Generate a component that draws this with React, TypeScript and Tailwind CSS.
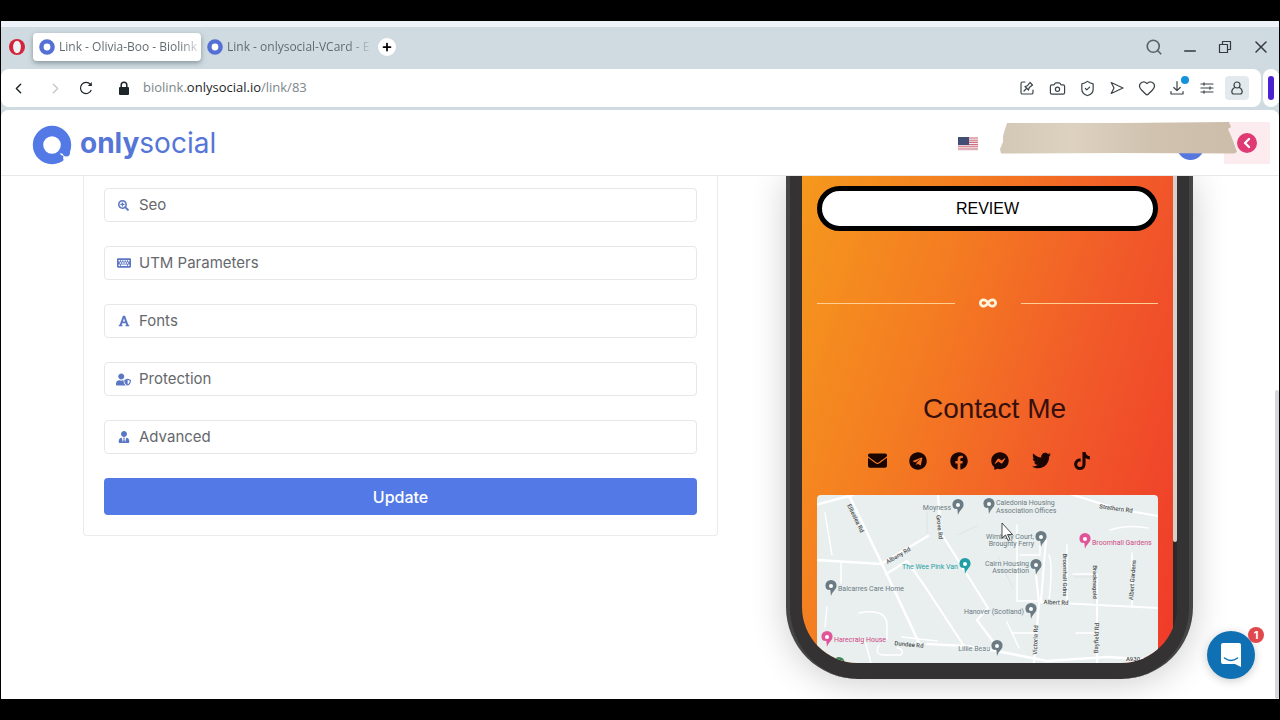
import type { ReactNode } from "react";
import {
  FaEnvelope,
  FaFacebook,
  FaFacebookMessenger,
  FaFont,
  FaInfinity,
  FaKeyboard,
  FaSearchPlus,
  FaTelegram,
  FaTiktok,
  FaTwitter,
  FaUserShield,
  FaUserTie,
} from "react-icons/fa";
import {
  Camera,
  ChevronLeft,
  ChevronRight,
  Heart,
  Minus,
  Plus,
  Search,
  ShieldCheck,
  X,
} from "lucide-react";

const sections = [
  { label: "Seo", icon: <FaSearchPlus size={11} /> },
  { label: "UTM Parameters", icon: <FaKeyboard size={14} /> },
  { label: "Fonts", icon: <FaFont size={12} /> },
  { label: "Protection", icon: <FaUserShield size={15} /> },
  { label: "Advanced", icon: <FaUserTie size={12} /> },
];

const socials = [
  { label: "Email", icon: <FaEnvelope size={19} /> },
  { label: "Telegram", icon: <FaTelegram size={18} /> },
  { label: "Facebook", icon: <FaFacebook size={18} /> },
  { label: "Messenger", icon: <FaFacebookMessenger size={18} /> },
  { label: "Twitter", icon: <FaTwitter size={19} /> },
  { label: "TikTok", icon: <FaTiktok size={18} /> },
];

function Favicon() {
  return (
    <svg viewBox="0 0 16 16" className="size-4 shrink-0">
      <circle cx="8" cy="8" r="5.6" fill="#fff" stroke="#5570d4" strokeWidth="4.4" />
    </svg>
  );
}

function OperaLogo() {
  return (
    <svg viewBox="0 0 16 16" className="size-4 shrink-0">
      <circle cx="8" cy="8" r="8" fill="#d3243b" />
      <ellipse cx="8" cy="8" rx="3.9" ry="6.2" fill="#eef3f5" />
    </svg>
  );
}

function LogoMark() {
  return (
    <svg viewBox="0 0 40 40" className="size-10 shrink-0">
      <circle cx="20" cy="20" r="14" fill="none" stroke="#5379e6" strokeWidth="10.4" />
      <path d="M27.800 28.200Q29 31 31.400 30.800Q30.500 33 32 37L40 35L39 30Q34 32.500 30 28.500Z" fill="#fff" />
      <circle cx="27.800" cy="33.400" r="3.200" fill="#5379e6" />
      <circle cx="34.400" cy="27.800" r="3.600" fill="#5379e6" />
    </svg>
  );
}

function Tool({ label, children }: { label: string; children: ReactNode }) {
  return (
    <button type="button" aria-label={label} className="relative flex size-6 items-center justify-center text-[#3a4347]">
      {children}
    </button>
  );
}

function Line({ d }: { d: string }) {
  return (
    <svg viewBox="0 0 16 16" className="size-4" fill="none" stroke="currentColor" strokeWidth="1.2" strokeLinecap="round" strokeLinejoin="round">
      <path d={d} />
    </svg>
  );
}

function TabBar() {
  return (
    <div className="flex h-[42px] items-center bg-[#cfdbe0] pb-[2px] pl-2 text-xs text-[#5d666a]">
      <button type="button" aria-label="Opera menu">
        <OperaLogo />
      </button>
      <button type="button" className="ml-2 flex h-7 w-[168px] items-center gap-1 rounded bg-white px-[6px] whitespace-nowrap shadow-[0_2px_5px_rgba(60,80,90,0.5)]">
        <Favicon />
        <span className="bg-[linear-gradient(to_right,#5d666a_88%,#d5d8da)] bg-clip-text text-transparent">Link - Olivia-Boo - Biolink</span>
      </button>
      <button type="button" className="flex h-7 w-[168px] items-center gap-1 px-[6px] whitespace-nowrap">
        <Favicon />
        <span className="bg-[linear-gradient(to_right,#5d666a_85%,#b9c5ca)] bg-clip-text text-transparent">Link - onlysocial-VCard - E</span>
      </button>
      <button type="button" aria-label="New tab" className="ml-[9px] flex size-[18px] items-center justify-center rounded-full bg-white text-black">
        <Plus size={12} strokeWidth={3.500} />
      </button>
      <div className="ml-auto flex items-center gap-[18px] pr-2 text-[#33393c]">
        <button type="button" aria-label="Search tabs" className="text-[#5a6468]">
          <Search size={18} strokeWidth={2.200} />
        </button>
        <button type="button" aria-label="Minimise" className="pt-2">
          <Minus size={18} strokeWidth={2} />
        </button>
        <button type="button" aria-label="Restore">
          <Line d="M2.500 5.500h8v8h-8zM5.500 5.500v-3h8v8h-3" />
        </button>
        <button type="button" aria-label="Close">
          <X size={20} strokeWidth={1.800} />
        </button>
      </div>
    </div>
  );
}

function AddressBar() {
  return (
    <div className="flex h-[38px] gap-[2px] bg-[#cfdbe0]">
      <div className="flex min-w-0 flex-1 items-center rounded-lg bg-white pr-3 pl-[9px]">
        <button type="button" aria-label="Back" className="text-[#1e2528]">
          <ChevronLeft size={17} strokeWidth={2} />
        </button>
        <button type="button" aria-label="Forward" className="ml-5 text-[#c3c8ca]">
          <ChevronRight size={17} strokeWidth={2} />
        </button>
        <button type="button" aria-label="Reload" className="ml-[14px] text-[#1e2528]">
          <svg viewBox="0 0 16 16" className="size-4" fill="none" stroke="currentColor" strokeWidth="1.2">
            <path d="M13.300 10A5.600 5.600 0 1 1 12.400 4.400" />
            <path d="M13.800 2v4h-4z" fill="currentColor" stroke="none" />
          </svg>
        </button>
        <svg viewBox="0 0 12 14" className="ml-6 h-[14px] w-3" fill="none">
          <rect x="1" y="6" width="10" height="8" rx="1" fill="#1e2528" />
          <path d="M3.200 6.500V4a2.800 2.800 0 0 1 5.600 0v2.500" stroke="#1e2528" strokeWidth="1.500" />
        </svg>
        <a href="#address" className="ml-[13px] text-[13px] text-[#7c868b]">
          biolink.<span className="text-[#1e2528]">onlysocial.io</span>/link/83
        </a>
        <div className="ml-auto flex gap-[6px]">
          <Tool label="Edit page">
            <Line d="M6 2H3.500A1.500 1.500 0 0 0 2 3.500v9A1.500 1.500 0 0 0 3.500 14h9a1.500 1.500 0 0 0 1.500-1.500V10M5 11l2.500-2.500M6 6.500l3.500 3.500.8-2.500L13.500 5 11 2.500 8.500 5.700z" />
          </Tool>
          <Tool label="Snapshot">
            <Camera size={17} strokeWidth={1.700} />
          </Tool>
          <Tool label="Ad blocker">
            <ShieldCheck size={17} strokeWidth={1.700} />
          </Tool>
          <Tool label="Flow">
            <Line d="M2.200 2.500L14 8 2.200 13.500 5 8z" />
          </Tool>
          <Tool label="Bookmark">
            <Heart size={18} strokeWidth={1.700} />
          </Tool>
          <Tool label="Downloads">
            <Line d="M8 1.500v9M4.800 7.500L8 10.700l3.200-3.200M2 11.500V14h12v-2.500" />
            <span className="absolute top-0 right-0 size-2 rounded-full bg-[#1592dc]" />
          </Tool>
          <Tool label="Easy setup">
            <Line d="M2 4h12M2 8h12M2 12h12M5 2.800v2.400M11 6.800v2.400M5 10.800v2.400" />
          </Tool>
          <button type="button" aria-label="Profile" className="flex size-6 items-center justify-center rounded bg-[#e3e9ed] text-[#3a4347]">
            <Line d="M8 2a3 3 0 1 1 0 6A3 3 0 0 1 8 2M5.900 7.200C4 8.300 2.800 10 2.800 11.800 2.800 13.200 3.600 14 5 14h6c1.400 0 2.200-.8 2.200-2.200 0-1.800-1.200-3.500-3.100-4.600" />
          </button>
        </div>
      </div>
      <div className="flex w-4 items-center justify-center rounded-lg bg-white">
        <span className="h-6 w-[6px] rounded-full bg-[#4a22cf]" />
      </div>
    </div>
  );
}

function Flag() {
  return (
    <svg viewBox="0 0 20 16" className="h-4 w-5" role="img" aria-label="English">
      <rect y="1" width="20" height="14" fill="#f4eef0" />
      <path d="M0 2h20M0 4.200h20M0 6.400h20M0 8.600h20M0 10.800h20M0 13h20" stroke="#cf6f7d" strokeWidth="1.100" />
      <rect y="1" width="11" height="8" fill="#414d75" />
    </svg>
  );
}

function SiteHeader() {
  return (
    <header className="flex h-[66px] items-center rounded-t-lg border-b border-[#e6e8ec] bg-white pr-[9px] pl-[31px]">
      <a href="#home" className="flex items-center gap-2 pt-1 font-['Inter','Liberation_Sans',sans-serif] text-[28px] leading-8 text-[#5576d6]">
        <LogoMark />
        <span className="pb-1">
          <span className="font-bold">only</span>social
        </span>
      </a>
      <button type="button" className="mr-[22px] ml-auto pt-[2px]">
        <Flag />
      </button>
      <div className="relative flex h-[42px] w-[270px] items-start justify-end">
        <button type="button" aria-label="Account" className="absolute right-[66px] bottom-1 size-[27px] rounded-full bg-[#5577de]" />
        <button type="button" aria-label="Open panel" className="flex h-[42px] w-[46px] items-center justify-center bg-[#fdecef]">
          <span className="flex size-5 items-center justify-center rounded-full bg-[#df3a73] text-white">
            <ChevronLeft size={16} strokeWidth={3.500} />
          </span>
        </button>
        <svg viewBox="0 0 238 32" className="absolute top-0 right-8 h-8 w-[238px]">
          <defs>
            <linearGradient id="tape" x1="0" x2="1">
              <stop offset="0" stopColor="#d3c7b5" />
              <stop offset="0.300" stopColor="#ddd1c0" />
              <stop offset="0.650" stopColor="#d0c2af" />
              <stop offset="1" stopColor="#cbbda9" />
            </linearGradient>
          </defs>
          <path d="M7 1L120 1 229 0 231 5 228 7 232 16 237 30 234 31.500 120 31 1 31.500 0 27 3 20 3 14z" fill="url(#tape)" />
        </svg>
      </div>
    </header>
  );
}

function SettingsCard() {
  return (
    <form className="min-w-0 flex-1 self-start rounded-b border border-t-0 border-[#e9ebef] px-5 pt-3 pb-5" onSubmit={(e) => e.preventDefault()}>
      <div className="flex flex-col gap-6">
        {sections.map((s) => (
          <button key={s.label} type="button" className="flex h-[34px] items-center gap-2 rounded border border-[#e6e7ea] px-[11px] text-left text-[15px] text-[#66686d]">
            <span className="flex w-[15px] justify-center text-[#5b76c4]">{s.icon}</span>
            {s.label}
          </button>
        ))}
        <button type="submit" className="h-[37px] rounded bg-[#5379e6] text-base font-medium text-white">
          Update
        </button>
      </div>
    </form>
  );
}

const GREY = "#6b7b83";
const TEAL = "#1f9ea3";
const PINK = "#cf4a86";

const pins = [
  { x: 141, y: 12, c: GREY },
  { x: 172, y: 11, c: GREY },
  { x: 224, y: 44, c: GREY },
  { x: 219, y: 72, c: GREY },
  { x: 214, y: 116, c: GREY },
  { x: 180, y: 153, c: GREY },
  { x: 14, y: 93, c: GREY },
  { x: 148, y: 71, c: TEAL },
  { x: 268, y: 46, c: "#e0559a" },
  { x: 10, y: 144, c: "#e0559a" },
  { x: 22, y: 170, c: "#3c8457" },
];

const places: { x: number; y: number; t: string; c: string; a?: "end" }[] = [
  { x: 134, y: 15, t: "Moyness", c: GREY, a: "end" },
  { x: 179, y: 10, t: "Caledonia Housing", c: GREY },
  { x: 179, y: 18, t: "Association Offices", c: GREY },
  { x: 217, y: 44, t: "Wimbury Court,", c: GREY, a: "end" },
  { x: 217, y: 51, t: "Broughty Ferry", c: GREY, a: "end" },
  { x: 212, y: 71, t: "Cairn Housing", c: GREY, a: "end" },
  { x: 212, y: 78, t: "Association", c: GREY, a: "end" },
  { x: 207, y: 119, t: "Hanover (Scotland)", c: GREY, a: "end" },
  { x: 173, y: 156, t: "Lillie Beau", c: GREY, a: "end" },
  { x: 21, y: 96, t: "Balcarres Care Home", c: GREY },
  { x: 141, y: 74, t: "The Wee Pink Van", c: TEAL, a: "end" },
  { x: 275, y: 50, t: "Broomhall Gardens", c: PINK },
  { x: 17, y: 147, t: "Harecraig House", c: PINK },
];

const roads = [
  { x: 39, y: 23, t: "Ellieslea Rd", r: 64 },
  { x: 81, y: 60, t: "Albany Rd", r: -30 },
  { x: 123, y: 32, t: "Grove Rd", r: 84 },
  { x: 92, y: 149, t: "Dundee Rd", r: 5 },
  { x: 299, y: 13, t: "Strathern Rd", r: 8 },
  { x: 239, y: 107, t: "Albert Rd", r: 2 },
  { x: 248, y: 80, t: "Broomhall Gdns", r: 90 },
  { x: 278, y: 87, t: "Bracknagold", r: 90 },
  { x: 315, y: 85, t: "Albert Gardens", r: -86 },
  { x: 218, y: 145, t: "Victoria Rd", r: -88 },
  { x: 279, y: 143, t: "Bayfield Rd", r: -88 },
  { x: 316, y: 163, t: "A930", r: 0 },
];

function MapView() {
  return (
    <svg viewBox="0 0 341 168" className="block w-full rounded-t bg-[#e9eeee]" role="img" aria-label="Map">
      <g fill="none" stroke="#fff" strokeLinecap="round" strokeLinejoin="round">
        <path strokeWidth="2.600" d="M-2 10L36 0M30 -4L65 69 103 150M0 65L64 69 111 41M110 149L150 151 190 158 230 166 290 162 341 165" />
        <path strokeWidth="2.200" d="M69 79L90 66 107 90 147 151M121 0L124 38 171 113 160 125 180 152M219 80L222 108 217 168M222 107L341 113M229 44L224 106M280 80V168M250 -2L301 14 341 21" />
        <path strokeWidth="1.500" d="M8 18L15 60M24 67V88M10 112L8 132M42 118q28 -5 28 12v14M85 142l35 4M48 146l6 22M62 150q-5 9 4 10h18q4-6-4-7M200 30V106h22M232 60q4 10 0 46M250 50V110M256 79h24M315 58V112M293 35q18 -6 38 -2M190 127l12 26M195 138h22M259 138h20M203 60h20v-10" />
        <path stroke="#dde4e4" strokeWidth="1" d="M258 82h20v27M110 18v20M140 40l20-9M181 62l15 31" />
      </g>
      {pins.map((p) => (
        <g key={`${p.x}-${p.y}`} transform={`translate(${p.x} ${p.y})`}>
          <path d="M0 8C-1-1 0 3-4 1.500A5.600 5.600 0 1 1 4 1.500C2 4 1 5 0 8Z" fill={p.c} />
          <circle cy="-2" r="2" fill="#fff" />
        </g>
      ))}
      <g fontFamily="Roboto, 'Liberation Sans', sans-serif" fontSize="7">
        {places.map((p) => (
          <text key={p.t} x={p.x} y={p.y} fill={p.c} textAnchor={p.a ?? "start"}>
            {p.t}
          </text>
        ))}
        {roads.map((p) => (
          <text key={p.t} transform={`translate(${p.x} ${p.y}) rotate(${p.r})`} fontSize="6" fontWeight="500" textAnchor="middle" dominantBaseline="central" fill="#4b5052">
            {p.t}
          </text>
        ))}
      </g>
      <path d="M185 28v15l3.500-3 2.500 5.500 2-1-2.500-5h5z" fill="#fff" stroke="#222" strokeWidth="0.800" />
    </svg>
  );
}

function PhonePreview() {
  return (
    <section aria-label="Preview" className="w-[407px] shrink-0 self-start rounded-b-[72px] border-x-4 border-[#454545] bg-[#343232] px-3 pb-4 shadow-[0_4px_36px_rgba(0,0,0,0.2)]">
      <div className="relative h-[487px] overflow-hidden rounded-b-[56px] bg-[#2b2929] pr-1 font-['Liberation_Sans',Arial,sans-serif]">
        <div className="h-full bg-[linear-gradient(108deg,#f5981d_0%,#f47a22_35%,#f15a29_65%,#ef3a2a_100%)] px-[15px] pt-[10px]">
          <button type="button" className="block h-[45px] w-full rounded-full border-[5px] border-black bg-white text-base text-black">
            REVIEW
          </button>
          <div className="mt-[62px] flex h-5 items-center justify-center gap-6 text-[#fff3dc]">
            <span className="h-px flex-1 bg-[#ffcf94]" />
            <FaInfinity size={18} />
            <span className="h-px flex-1 bg-[#ffcf94]" />
          </div>
          <h2 className="mt-[78px] pl-[14px] text-center text-[28px] leading-9 text-[#35100c]">Contact Me</h2>
          <div className="mt-6 flex justify-center gap-[17px] pr-4 text-[#1a0503]">
            {socials.map((s) => (
              <a key={s.label} href={`#${s.label}`} aria-label={s.label} className="flex h-[19px] w-6 items-center justify-center">
                {s.icon}
              </a>
            ))}
          </div>
          <div className="mt-[25px]">
            <MapView />
          </div>
        </div>
        <div className="absolute top-0 right-0 h-[366px] w-1 rounded-b bg-[#d8cfcb]" />
      </div>
    </section>
  );
}

function ChatButton() {
  return (
    <button type="button" aria-label="Open chat, 1 unread" className="absolute right-6 bottom-5 flex size-12 items-center justify-center rounded-full bg-[#0f71b3] shadow-[0_2px_10px_rgba(0,0,0,0.2)]">
      <svg viewBox="0 0 24 28" className="h-7 w-6">
        <path d="M4 2h16q2 0 2 2v22l-6-3H4q-2 0-2-2V4q0-2 2-2z" fill="#fff" />
        <path d="M5.500 17q6.500 5 13 0" fill="none" stroke="#0f71b3" strokeWidth="1.400" strokeLinecap="round" />
      </svg>
      <span className="absolute -top-1 -right-[9px] flex size-4 items-center justify-center rounded-full bg-[#e0484c] text-[11px] font-bold text-white">1</span>
    </button>
  );
}

export default function App() {
  return (
    <div className="h-screen bg-black py-[21px] font-['Open_Sans','Noto_Sans',sans-serif]">
      <div className="flex h-full flex-col border-x border-black bg-[#cfdbe0]">
        <div className="h-[6px] shrink-0 bg-[#edf3f8]" />
        <TabBar />
        <AddressBar />
        <div className="relative mt-[3px] flex min-h-0 flex-1 flex-col rounded-t-lg bg-white font-['Inter','Liberation_Sans',sans-serif]">
          <SiteHeader />
          <main className="flex min-h-0 flex-1 gap-[68px] overflow-hidden pr-[86px] pl-[82px]">
            <SettingsCard />
            <PhonePreview />
          </main>
          <div className="absolute right-0 bottom-0 h-[309px] w-1 rounded-full bg-[#d5d6d8]" />
          <ChatButton />
        </div>
      </div>
    </div>
  );
}
